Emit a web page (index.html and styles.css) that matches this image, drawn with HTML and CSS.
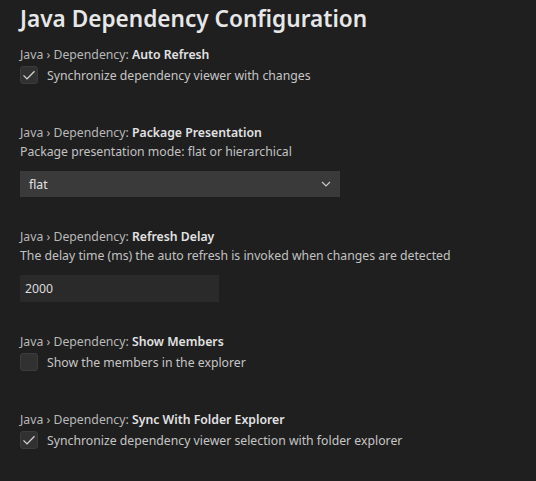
FILE: index.html
```html
<!DOCTYPE html>
<html lang="en">
<head>
<meta charset="utf-8">
<title>Java Dependency Configuration</title>
<link rel="stylesheet" href="styles.css">
</head>
<body>
<main class="page">
  <h1 class="title">Java Dependency Configuration</h1>
  <div class="settings">
    <section class="setting setting--bool">
      <div class="setting-label">Java › Dependency: <strong>Auto Refresh</strong></div>
      <label class="check-row">
        <span class="checkbox is-checked">
          <svg viewBox="0 0 16 16" width="16" height="16"><path d="M2.5 8.4 L6 11.9 L13.5 4.2" fill="none" stroke="currentColor" stroke-width="1.3"/></svg>
        </span>
        <span class="check-text">Synchronize dependency viewer with changes</span>
      </label>
    </section>

    <section class="setting setting--value">
      <div class="setting-label">Java › Dependency: <strong>Package Presentation</strong></div>
      <div class="setting-desc">Package presentation mode: flat or hierarchical</div>
      <div class="select">
        <span class="select-value">flat</span>
        <svg class="chevron" viewBox="0 0 10 6" width="10" height="6"><path d="M1 1 L5 5 L9 1" fill="none" stroke="currentColor" stroke-width="1.2"/></svg>
      </div>
    </section>

    <section class="setting setting--value">
      <div class="setting-label">Java › Dependency: <strong>Refresh Delay</strong></div>
      <div class="setting-desc">The delay time (ms) the auto refresh is invoked when changes are detected</div>
      <div class="text-input">2000</div>
    </section>

    <section class="setting setting--bool">
      <div class="setting-label">Java › Dependency: <strong>Show Members</strong></div>
      <label class="check-row">
        <span class="checkbox"></span>
        <span class="check-text">Show the members in the explorer</span>
      </label>
    </section>

    <section class="setting setting--bool">
      <div class="setting-label">Java › Dependency: <strong>Sync With Folder Explorer</strong></div>
      <label class="check-row">
        <span class="checkbox is-checked">
          <svg viewBox="0 0 16 16" width="16" height="16"><path d="M2.5 8.4 L6 11.9 L13.5 4.2" fill="none" stroke="currentColor" stroke-width="1.3"/></svg>
        </span>
        <span class="check-text">Synchronize dependency viewer selection with folder explorer</span>
      </label>
    </section>
  </div>
</main>
</body>
</html>
```
FILE: styles.css
```css
html, body {
  margin: 0;
  background: #1f1f1f;
}

body {
  font-family: "Noto Sans", "Open Sans", sans-serif;
  font-size: 12.25px;
  color: #cccccc;
}

.page {
  padding: 3px 20px 0;
}

.title {
  margin: 0;
  font-size: 22.6px;
  line-height: 32px;
  font-weight: 600;
  color: #e7e7e7;
}

.settings {
  display: flex;
  flex-direction: column;
  margin-top: 9px;
}

.setting {
  display: flex;
  flex-direction: column;
}

.setting--bool {
  padding-bottom: 38px;
}

.setting--value {
  padding-bottom: 29px;
}

.setting-label {
  line-height: 20px;
  padding-top: 1px;
  margin-bottom: -1px;
  color: #b9b9b9;
}

.setting-label strong {
  font-weight: 600;
  color: #e2e2e2;
}

.setting-desc {
  line-height: 20px;
  color: #c2c2c2;
  margin-bottom: 9px;
}

.check-row {
  display: flex;
  align-items: center;
  gap: 9px;
  margin-top: 2px;
  height: 18px;
}

.checkbox {
  box-sizing: border-box;
  width: 18px;
  height: 18px;
  border-radius: 3px;
  background: #313131;
  border: 1px solid #3c3c3c;
  display: flex;
  align-items: center;
  justify-content: center;
  color: #d4d4d4;
}

.check-text {
  color: #c6c6c6;
}

.select {
  box-sizing: border-box;
  width: 320px;
  height: 26px;
  background: #3a3a3a;
  display: flex;
  align-items: center;
  justify-content: space-between;
  padding: 0 9px 0 9px;
  color: #e2e2e2;
}

.chevron {
  color: #c8c8c8;
}

.text-input {
  box-sizing: border-box;
  width: 199px;
  height: 27px;
  background: #2a2a2a;
  padding: 0 5px;
  line-height: 27px;
  color: #dcdcdc;
}
```
